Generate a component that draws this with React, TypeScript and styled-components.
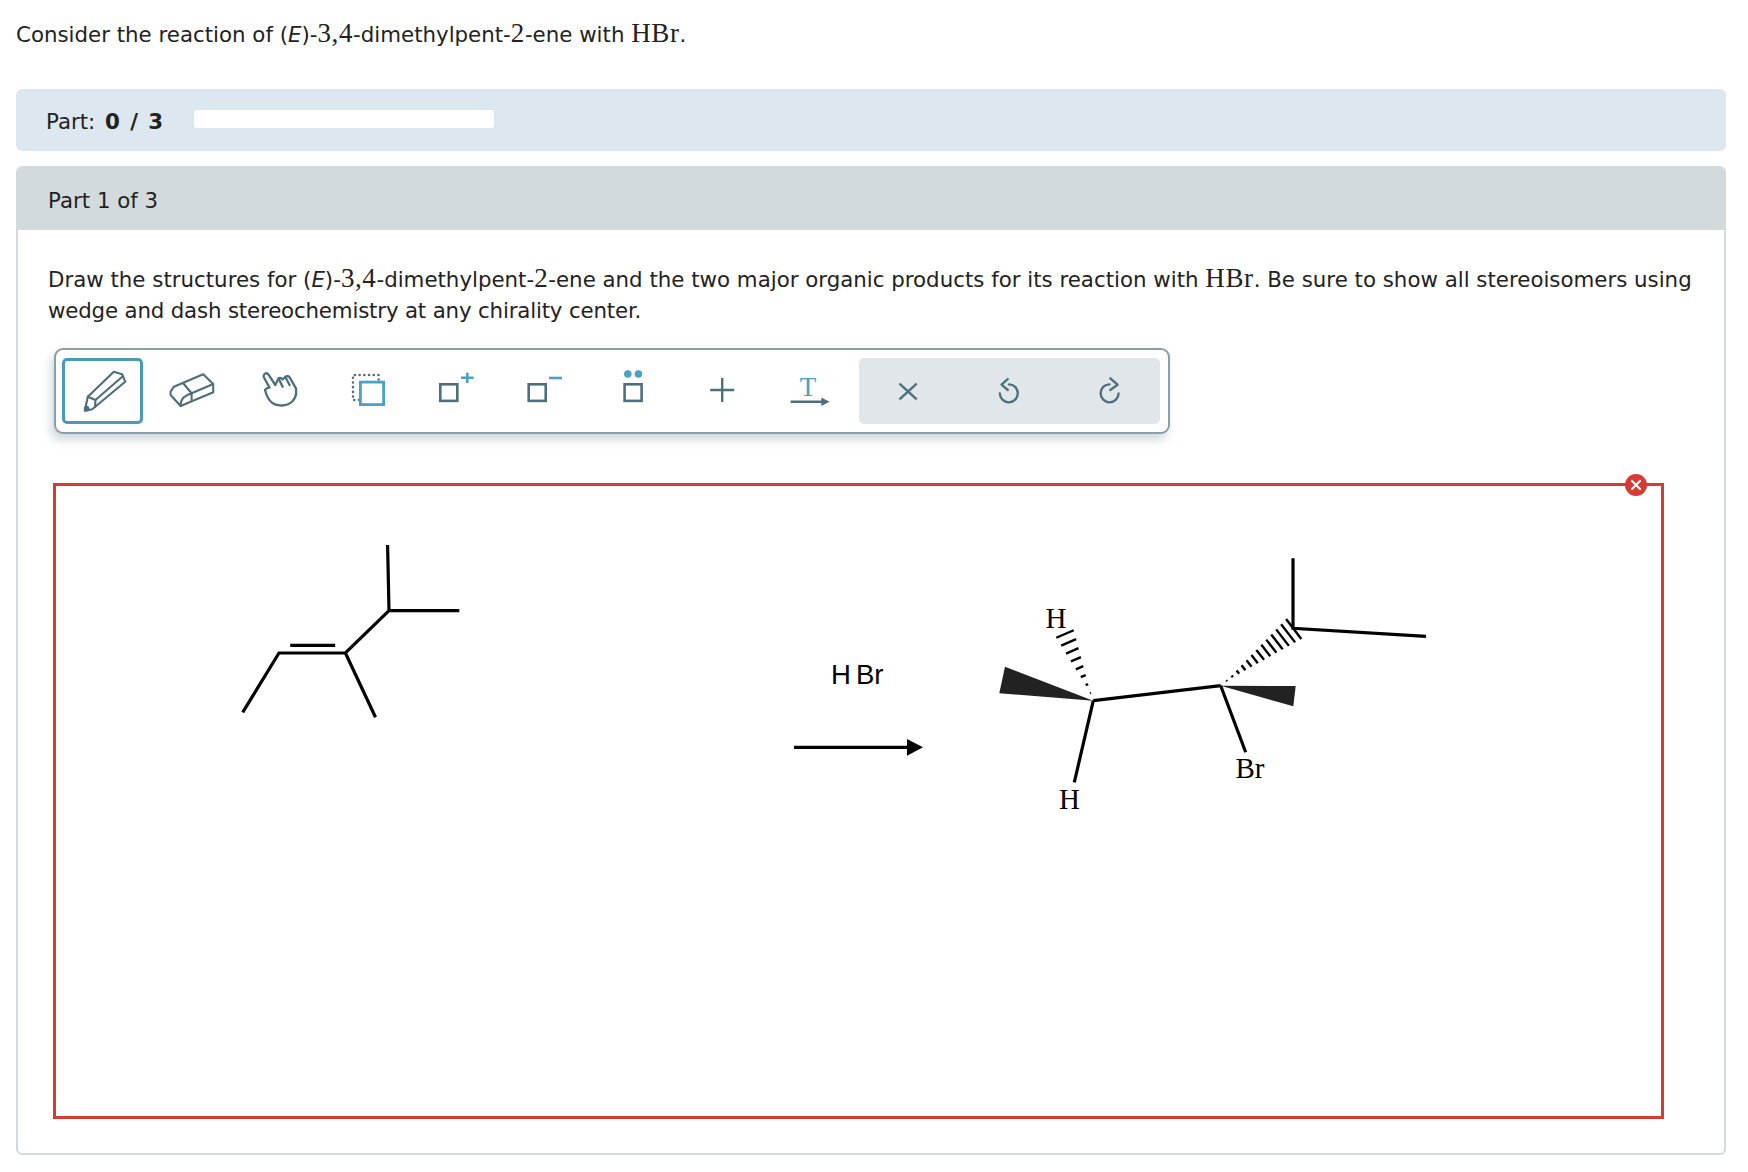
import { FC } from 'react';
import styled, { createGlobalStyle } from 'styled-components';

const GlobalStyle = createGlobalStyle`
  html, body {
    margin: 0;
    padding: 0;
    background: #fff;
    color: #222;
    font-family: 'DejaVu Sans', Verdana, sans-serif;
    font-size: 21.33px;
  }
`;

const Page = styled.div`
  width: 1748px;
  height: 1172px;
  box-sizing: border-box;
  padding: 18px 22px 0 16px;
  overflow: hidden;
`;

const Question = styled.div`
  height: 33px;
  line-height: 33px;
  margin-bottom: 38px;
  white-space: nowrap;
`;

const M = styled.span`
  font-family: 'Liberation Serif', 'Times New Roman', serif;
  font-size: 27px;
  line-height: 1;
  letter-spacing: 0.6px;
`;

const ProgressBar = styled.div`
  height: 62px;
  background: #dde7f0;
  border-radius: 6px;
  display: flex;
  align-items: center;
  padding-left: 30px;
  margin-bottom: 15px;
`;

const ProgressLabel = styled.div`
  width: 148px;
  padding-top: 2px;
  b {
    letter-spacing: 1.4px;
    margin-left: 3px;
  }
`;

const Track = styled.div`
  width: 300px;
  height: 18px;
  background: #fff;
  border-radius: 3px;
  margin-top: -3px;
`;

const Card = styled.section`
  height: 989px;
  box-sizing: border-box;
  border: 2px solid #d3dadd;
  border-top: 0;
  border-radius: 6px;
  overflow: hidden;
`;

const CardHeader = styled.header`
  height: 64px;
  box-sizing: border-box;
  margin: 0 -2px;
  padding: 5px 0 0 32px;
  background: #d3dadd;
  display: flex;
  align-items: center;
`;

const CardBody = styled.div`
  padding: 34px 30px 0 30px;
`;

const Prompt = styled.p`
  margin: 0 0 22px;
  line-height: 31px;
  white-space: nowrap;
`;

const PromptTail = styled.span`
  letter-spacing: -0.17px;
`;

const Toolbar = styled.div`
  width: 1116px;
  height: 86px;
  margin-left: 6px;
  box-sizing: border-box;
  border: 2px solid #8a9fa8;
  border-radius: 9px;
  padding: 8px 8px 8px 6px;
  display: flex;
  gap: 7.6px;
  background: #fff;
  box-shadow: -3px 6px 10px rgba(85, 115, 128, 0.28);
  margin-bottom: 49px;
`;

const ToolButton = styled.button<{ $active?: boolean }>`
  width: 81px;
  height: 66px;
  flex: none;
  padding: 0;
  background: none;
  box-sizing: border-box;
  border: ${(p) => (p.$active ? '3px solid #4a9ab5' : '0')};
  border-radius: 5px;
  display: flex;
  align-items: center;
  justify-content: center;
`;

const ActionPanel = styled.div`
  width: 301px;
  height: 66px;
  flex: none;
  margin-left: -0.4px;
  background: #e0e6e9;
  border-radius: 5px;
  display: flex;
`;

const ActionButton = styled.button`
  flex: 1;
  padding: 0;
  background: none;
  border: 0;
  display: flex;
  align-items: center;
  justify-content: center;
`;

const Canvas = styled.div`
  position: relative;
  width: 1611px;
  height: 636px;
  margin-left: 5px;
  box-sizing: border-box;
  border: 3px solid #d63a33;
`;

const CanvasDrawing = styled.svg`
  display: block;
  width: 1605px;
  height: 630px;
`;

const ErrorBadge = styled.div`
  position: absolute;
  top: -12.5px;
  right: 14px;
  width: 22px;
  height: 22px;
  border-radius: 50%;
  background: #d63a33;
  display: flex;
  align-items: center;
  justify-content: center;
`;

const TextToolGlyph = styled.text`
  font-family: 'Liberation Serif', 'Times New Roman', serif;
  font-size: 27px;
  fill: #4aa3c4;
  stroke: none;
  text-anchor: middle;
`;

const Atom = styled.text`
  font-family: 'Liberation Serif', 'Times New Roman', serif;
  font-size: 29px;
  fill: #000;
  stroke: none;
`;

const Reagent = styled.text`
  font-family: 'Liberation Sans', Arial, sans-serif;
  font-size: 27.5px;
  fill: #000;
  stroke: none;
`;

const GRAY = '#4f6e7c';
const BLUE = '#4aa3c4';

const Icon: FC<{ children: any }> = ({ children }) => (
  <svg width="48" height="48" viewBox="0 0 48 48" fill="none" stroke={GRAY} strokeWidth="2" strokeLinejoin="round" strokeLinecap="round">
    {children}
  </svg>
);

const Sq: FC<{ x: number }> = ({ x }) => <rect x={x} y="17.3" width="17" height="16.6" strokeWidth="2.6" strokeLinejoin="miter" />;

const Hash: FC<{ from: number[]; to: number[]; width: number; n: number }> = ({ from, to, width, n }) => {
  const dx = to[0] - from[0];
  const dy = to[1] - from[1];
  const len = Math.hypot(dx, dy);
  const px = -dy / len;
  const py = dx / len;
  const lines = [];
  for (let i = 0; i < n; i++) {
    const t = i / (n - 1);
    const cx = from[0] + dx * t;
    const cy = from[1] + dy * t;
    const w = (width / 2) * Math.max(t, 0.05);
    lines.push(<line key={i} x1={cx - px * w} y1={cy - py * w} x2={cx + px * w} y2={cy + py * w} />);
  }
  return <g strokeWidth="2.4">{lines}</g>;
};

export default function App() {
  return (
    <Page>
      <GlobalStyle />
      <Question>
        Consider the reaction of (<i>E</i>)-<M>3,4</M>-dimethylpent-<M>2</M>-ene with <M>HBr</M>.
      </Question>

      <ProgressBar>
        <ProgressLabel>
          Part: <b>0 / 3</b>
        </ProgressLabel>
        <Track />
      </ProgressBar>

      <Card>
        <CardHeader>Part 1 of 3</CardHeader>
        <CardBody>
          <Prompt>
            Draw the structures for (<i>E</i>)-<M>3,4</M>-dimethylpent-<M>2</M>-ene and the two major organic products for its reaction with <M>HBr</M>. Be sure to show all stereoisomers using
            <br />
            <PromptTail>wedge and dash stereochemistry at any chirality center.</PromptTail>
          </Prompt>

          <Toolbar>
            <ToolButton $active>
              <Icon>
                <path d="M8.8 29.7 L34.8 4.7 L43.2 7.3 L46.2 14.7 L13.2 42.3 L5.8 43.7 Z" strokeWidth="2.1" />
                <path d="M8.8 29.7 L16.5 33 L16 40 M16.5 33 L43.5 9.5" strokeWidth="2.1" />
                <circle cx="7.6" cy="41.6" r="2.8" fill={GRAY} stroke="none" />
              </Icon>
            </ToolButton>
            <ToolButton>
              <Icon>
                <path d="M3.6 24.7 L6.9 19.7 L36.2 7.3 L46.2 17 L46.2 25.3 L13.6 39 L3.6 28 Z" strokeWidth="2.1" />
                <path d="M16.2 16.3 L24.6 26.3 L46.2 17 M24.6 26.3 L24.6 33.7 M13.6 39 C13.6 31 18 28.5 24.6 26.3" strokeWidth="2.1" />
              </Icon>
            </ToolButton>
            <ToolButton>
              <Icon>
                <path
                  d="M7.6 9.7 C7.4 6.6 10.6 5.2 12.4 7.4 L19.3 18 L22.4 11.8 C24 10.4 26 11 26.6 12.5 L29.3 10 C31 8.6 33.2 9.2 33.8 10.6 L40 21.3 C41 28 38.5 34 32.6 37 C27 39.6 20 38.5 16 35.7 C12.5 33 10.5 28.5 9 23 C10.5 21 12 20.5 13.6 20.7 Z"
                  strokeWidth="2.3"
                />
                <path d="M22.6 11.5 L26.6 19.7 M29.3 10 L33.6 18" strokeWidth="2.3" />
              </Icon>
            </ToolButton>
            <ToolButton>
              <Icon>
                <path d="M15 33 L9 33 L9 8 L34.7 8 L34.7 13" strokeDasharray="0.1 4.6" strokeWidth="2.5" />
                <rect x="16.4" y="15.1" width="23.2" height="22.5" stroke={BLUE} strokeWidth="2.8" strokeLinejoin="miter" />
              </Icon>
            </ToolButton>
            <ToolButton>
              <Icon>
                <Sq x={7.3} />
                <path d="M34.3 5.7 L34.3 16 M28 10.8 L40.6 10.8" stroke={BLUE} strokeWidth="2.6" strokeLinecap="butt" />
              </Icon>
            </ToolButton>
            <ToolButton>
              <Icon>
                <Sq x={7.7} />
                <path d="M28 11 L41 11" stroke={BLUE} strokeWidth="2.6" strokeLinecap="butt" />
              </Icon>
            </ToolButton>
            <ToolButton>
              <Icon>
                <Sq x={14.6} />
                <circle cx="17.8" cy="7" r="3.8" fill={BLUE} stroke="none" />
                <circle cx="28.4" cy="7" r="3.8" fill={BLUE} stroke="none" />
              </Icon>
            </ToolButton>
            <ToolButton>
              <Icon>
                <path d="M23.2 11 L23.2 35 M11.2 23 L35.2 23" strokeWidth="2.4" strokeLinecap="butt" />
              </Icon>
            </ToolButton>
            <ToolButton>
              <Icon>
                <TextToolGlyph x="21" y="29">T</TextToolGlyph>
                <path d="M3.6 34.7 L36 34.7" strokeWidth="2.6" strokeLinecap="butt" />
                <path d="M34.3 30.5 L42.6 34.7 L34.3 39 Z" fill={GRAY} stroke="none" />
              </Icon>
            </ToolButton>
            <ActionPanel>
              <ActionButton>
                <Icon>
                  <path d="M14.5 16.7 L31.7 32.3 M31.7 16.7 L14.5 32.3" strokeWidth="2.4" strokeLinecap="butt" />
                </Icon>
              </ActionButton>
              <ActionButton>
                <Icon>
                  <path d="M23.8 17.3 A9 9 0 1 1 14.8 26.3" strokeWidth="2.3" />
                  <path d="M22.8 12 L16.5 17.7 L22.8 23" strokeWidth="2.3" />
                </Icon>
              </ActionButton>
              <ActionButton>
                <Icon>
                  <path d="M23.6 17.3 A9 9 0 1 0 32.6 26.3" strokeWidth="2.3" />
                  <path d="M24.3 11.3 L31.6 17.7 L24.3 23" strokeWidth="2.3" />
                </Icon>
              </ActionButton>
            </ActionPanel>
          </Toolbar>

          <Canvas>
            <CanvasDrawing viewBox="56 487 1605 630" fill="none" stroke="#000" strokeWidth="3.2">
              <path d="M387.6 546 L389 611.7 L459.3 611.7 M389 611.7 L345.4 654 L279 654 L242.7 713.3 M345.4 654 L375.5 718.3 M290.2 646.3 L335.2 646.3" />

              <Reagent x="831" y="685">H</Reagent>
              <Reagent x="856" y="685">Br</Reagent>
              <path d="M794 748.3 L908 748.3" />
              <path d="M907 740 L923 748.3 L907 756.7 Z" fill="#000" stroke="none" />

              <path d="M1093.3 701.7 L1220.7 686.7 M1293 559.3 L1293 629.3 L1426 637.3 M1093.3 701.7 L1074.3 783.3 M1220.7 686.7 L1245.7 753.3" />
              <path d="M1093.3 701.7 L1005 667.7 L999.3 694.3 Z" fill="#222" stroke="none" />
              <path d="M1220.7 686.7 L1295.7 687 L1293.3 707.3 Z" fill="#222" stroke="none" />
              <Hash from={[1090.5, 694]} to={[1065, 635]} width={19} n={8} />
              <Hash from={[1226.7, 681.7]} to={[1293.7, 630]} width={25} n={13} />
              <Atom x="1045.5" y="628.5">H</Atom>
              <Atom x="1059" y="810">H</Atom>
              <Atom x="1235.5" y="779">Br</Atom>
            </CanvasDrawing>
            <ErrorBadge>
              <svg width="12" height="12" viewBox="0 0 12 12" stroke="#fff" strokeWidth="2.2" strokeLinecap="round">
                <path d="M2 2 L10 10 M10 2 L2 10" />
              </svg>
            </ErrorBadge>
          </Canvas>
        </CardBody>
      </Card>
    </Page>
  );
}
